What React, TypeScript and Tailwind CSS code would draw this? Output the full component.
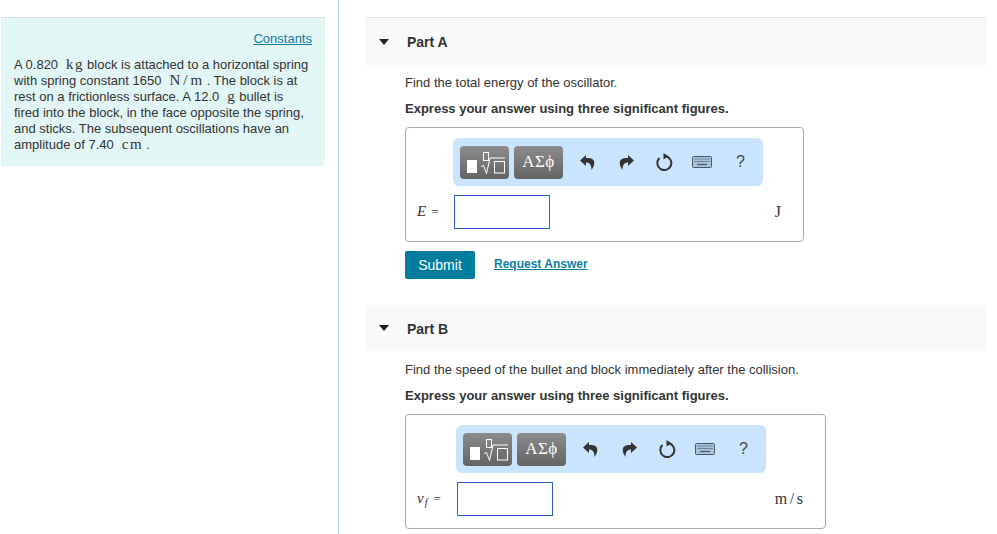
const sans = "font-['Liberation_Sans',Arial,sans-serif]";
const serif = "font-['Liberation_Serif','Times_New_Roman',serif]";

function Unit({ children }: { children: React.ReactNode }) {
  return <span className={`${serif} ml-[8px] mr-[3px] text-[15px] leading-[0] tracking-[1.5px]`}>{children}</span>;
}

function Slash() {
  return <span className="mx-[1.5px]">/</span>;
}

function Caret() {
  return (
    <svg width="10" height="6" viewBox="0 0 10 6" className="shrink-0">
      <path d="M0 0h10L5 6z" fill="#222" />
    </svg>
  );
}

const undoPath = 'M6 0 0 5.500 6 11V7.500c3.500 0 5.500 2 5.500 7.500 2-3 3.500-6 2.500-9-1-2.500-4-3-8-3z';

function Toolbar() {
  return (
    <div className="flex h-12 w-[310px] items-center rounded-md bg-[#c9e4fc] pl-[7px]">
      <div className="h-[33px] w-[49px] overflow-hidden rounded-[4px] bg-gradient-to-b from-[#8c8c8c] to-[#646464]">
        <svg width="49" height="33" viewBox="0 0 49 33" fill="none" stroke="#fff" strokeWidth="1">
          <rect x="7" y="14" width="10" height="13" fill="#fff" stroke="none" />
          <rect x="23.500" y="6.500" width="5" height="8" />
          <path d="M21 20.500l2.500-1 3 8 3.500-15.500h15" />
          <rect x="34.500" y="15.500" width="10" height="11.500" />
        </svg>
      </div>
      <div className={`${serif} ml-[5px] flex h-[33px] w-[49px] items-center justify-center rounded-[4px] bg-gradient-to-b from-[#8c8c8c] to-[#646464] text-[17px] tracking-[0.5px] text-white`}>
        ΑΣϕ
      </div>
      <svg width="15" height="15" viewBox="0 0 15 15" fill="#333" className="ml-[17px]">
        <path d={undoPath} />
      </svg>
      <svg width="15" height="15" viewBox="0 0 15 15" fill="#333" className="ml-[24px] -scale-x-100">
        <path d={undoPath} />
      </svg>
      <svg width="17" height="18" viewBox="0 0 17 18" fill="none" className="ml-[22px]">
        <path d="M10 3.300A7 7 0 1 1 3.500 5" stroke="#333" strokeWidth="2" />
        <path d="M7.500 0 12.500 3.200 7.500 6.500z" fill="#333" />
      </svg>
      <svg width="20" height="12" viewBox="0 0 20 12" className="ml-[19px]">
        <rect x="0.500" y="0.500" width="19" height="11" rx="1" fill="#a9c3da" stroke="#46586a" />
        <path d="M2.500 3h15M2.500 5.500h15" stroke="#46586a" strokeWidth="1.200" strokeDasharray="1.200 0.800" />
        <path d="M5 8.500h10" stroke="#46586a" strokeWidth="1.200" />
      </svg>
      <span className={`${sans} ml-[24px] text-[16px] text-[#444]`}>?</span>
    </div>
  );
}

function AnswerBox({ wide, label, unit }: { wide?: boolean; label: React.ReactNode; unit: React.ReactNode }) {
  return (
    <div className={`mt-[10px] h-[115px] rounded-[4px] border border-[#aaa] ${wide ? 'w-[421px] pl-[50px]' : 'w-[399px] pl-[47px]'} pr-[21px] pt-[10px]`}>
      <Toolbar />
      <div className="ml-px mt-[9px] flex items-center">
        <div className={`${serif} ${wide ? '-ml-[40px] w-[40px]' : '-ml-[37px] w-[37px]'} mb-px flex items-baseline text-[15px] text-[#333]`}>{label}</div>
        <div className="h-[34px] w-[96px] border border-[#2f5fc4] bg-white" />
        <div className={`${serif} mb-px ml-auto text-[16px] tracking-[1px] text-[#333]`}>{unit}</div>
      </div>
    </div>
  );
}

export default function App() {
  return (
    <div className={`${sans} flex h-[534px] w-[997px] overflow-hidden bg-white text-[#333]`}>
      <div className="h-full w-[339px] shrink-0 border-r border-[#b8cfe4] pl-px pt-[17px]">
        <div className="h-[149px] w-[324px] border-t border-[#d3dfe6] bg-[#e2f6f6] pl-[13px] pr-[13px] pt-[13px] text-[13px] leading-4">
          <div className="text-right">
            <a className="text-[#0f7fa6] underline">Constants</a>
          </div>
          <p className="mt-[10px]">
            A 0.820<Unit>kg</Unit>block is attached to a horizontal spring with spring constant 1650<Unit>N<Slash />m</Unit>. The block is at rest on a frictionless surface. A 12.0<Unit>g</Unit>bullet is fired into the block, in the face opposite the spring, and sticks. The subsequent oscillations have an amplitude of 7.40<Unit>cm</Unit>.
          </p>
        </div>
      </div>

      <div className="ml-[26px] w-[622px] shrink-0 pt-[17px]">
        <div className="flex h-12 items-center border-t border-[#e4e4e4] bg-[#f9f9f9] pl-[14px]">
          <Caret />
          <span className="ml-[18px] pt-[2px] text-[14px] font-bold text-[#333]">Part A</span>
        </div>
        <div className="pl-10">
          <p className="mt-[10px] text-[13px] leading-4">Find the total energy of the oscillator.</p>
          <p className="mt-[10px] text-[13px] font-bold leading-4">Express your answer using three significant figures.</p>
          <AnswerBox label={<><i>E</i><span className="ml-[5px] text-[13px]">=</span></>} unit="J" />
          <div className="mt-[9px] flex items-start">
            <button className="h-7 w-[70px] rounded-[2px] bg-[#007c9f] text-[14px] text-white">Submit</button>
            <a className="ml-[19px] mt-[4px] text-[12px] font-bold text-[#0f7fa6] underline">Request Answer</a>
          </div>
        </div>

        <div className="mt-[26px] flex h-[46px] items-center bg-[#f9f9f9] pl-[14px]">
          <Caret />
          <span className="ml-[18px] pt-[2px] text-[14px] font-bold text-[#333]">Part B</span>
        </div>
        <div className="pl-10">
          <p className="mt-[11px] text-[13px] leading-4">Find the speed of the bullet and block immediately after the collision.</p>
          <p className="mt-[10px] text-[13px] font-bold leading-4">Express your answer using three significant figures.</p>
          <AnswerBox wide label={<><i className="tracking-[1px]">v</i><i className="relative top-[3px] text-[10px]">f</i><span className="ml-[6px] text-[13px]">=</span></>} unit={<>m<Slash />s</>} />
        </div>
      </div>
    </div>
  );
}
